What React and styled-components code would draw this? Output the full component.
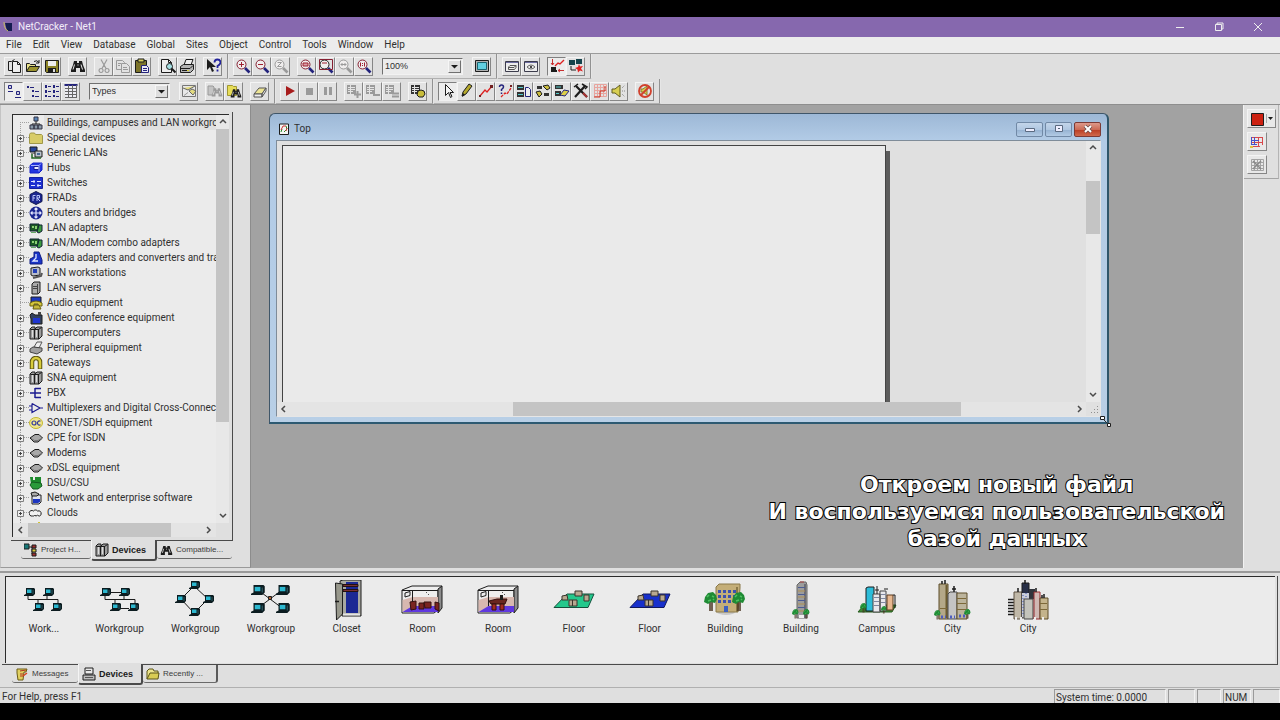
import React from "react";
import styled, { createGlobalStyle, css } from "styled-components";

const UI = 'Roboto, "Open Sans", sans-serif';
const ARIAL = '"Liberation Sans", Arial, sans-serif';

const Global = createGlobalStyle`
  * { box-sizing: border-box; }
  body { margin: 0; background: #000; }
  button, select { font: inherit; color: inherit; margin: 0; padding: 0; border: 0; background: none; border-radius: 0; }
  ul { list-style: none; margin: 0; padding: 0; }
  svg { flex: none; }
`;

/* ---------- frame ---------- */
const Shell = styled.div`
  height: 100vh;
  min-height: 600px;
  padding: 17px 0;
  display: flex;
  flex-direction: column;
  background: #000;
  color: #303030;
  font: 10px/14px ${UI};
`;
const Frame = styled.div`
  flex: 1;
  min-height: 0;
  display: flex;
  flex-direction: column;
  background: #dfdfdf;
`;
const TitleBar = styled.header`
  height: 20px;
  display: flex;
  align-items: center;
  background: #8668ae;
  color: #f3edf9;
  padding: 0 3px;
`;
const Title = styled.h1`
  flex: 1;
  margin: 0 0 0 5px;
  font: inherit;
`;
const WindowControl = styled.button`
  width: 39px;
  height: 20px;
  display: flex;
  align-items: center;
  justify-content: center;
`;
const MenuBar = styled.nav`
  height: 17px;
  display: flex;
  align-items: center;
  gap: 11px;
  padding-left: 6px;
  background: #ececec;
  border-bottom: 1px solid #9b9b9b;
`;

/* ---------- toolbars ---------- */
const ToolRow = styled.div`
  height: 25px;
  display: flex;
  flex: none;
`;
const Band = styled.div`
  display: flex;
  align-items: center;
  gap: 7px;
  padding: 0 5px 0 4px;
  border-bottom: 1px solid #b0b0b0;
  border-right: 2px groove #e6e6e6;
`;
const Group = styled.div`
  display: flex;
`;
const ToolButton = styled.button`
  width: 19px;
  height: 19px;
  display: flex;
  align-items: center;
  justify-content: center;
  background: #e2e2e2;
  border: 1px solid;
  border-color: #f4f4f4 #868686 #868686 #f4f4f4;
  ${(p) =>
    p.$pressed &&
    css`
      background: #ececec;
      border-color: #808080 #f0f0f0 #f0f0f0 #808080;
    `}
`;
const ComboBox = styled.label`
  position: relative;
  width: 81px;
  height: 17px;
  margin: 0 2px;
  display: block;
  background: #ececec;
  border: 1px solid;
  border-color: #707070 #f2f2f2 #f2f2f2 #707070;
  select {
    appearance: none;
    display: block;
    width: 100%;
    height: 15px;
    padding: 0 2px;
    font: 9px/15px ${ARIAL};
    outline: 0;
  }
`;
const ComboArrow = styled.span`
  position: absolute;
  top: 1px;
  right: 1px;
  width: 13px;
  height: 13px;
  display: flex;
  align-items: center;
  justify-content: center;
  background: #dedede;
  border: 1px solid;
  border-color: #f6f6f6 #707070 #707070 #f6f6f6;
  pointer-events: none;
`;

/* ---------- body ---------- */
const Body = styled.div`
  flex: 1;
  min-height: 0;
  display: flex;
  border-top: 1px solid #8e8e8e;
`;
const Side = styled.aside`
  width: 251px;
  flex: none;
  display: flex;
  flex-direction: column;
  padding: 7px 17px 6px 10px;
  border-left: 1px solid #c4c4c4;
  border-right: 1px solid #8c8c8c;
  border-bottom: 1px solid #9a9a9a;
`;
const TreeFrame = styled.div`
  flex: 1;
  min-height: 0;
  padding: 2px 3px 3px 1px;
  border-right: 1px solid #4a4a4a;
  border-bottom: 1px solid #4a4a4a;
  display: flex;
`;
const TreeBox = styled.div`
  flex: 1;
  min-width: 0;
  display: grid;
  grid-template: minmax(0, 1fr) 14px / minmax(0, 1fr) 13px;
  background: #dfdfdf;
  border-top: 1px solid #2c2c2c;
  border-left: 1px solid #2c2c2c;
`;
const TreeList = styled.ul`
  overflow: hidden;
  background: #ebebeb;
`;
const TreeRow = styled.li`
  height: 15px;
  display: flex;
  align-items: center;
  white-space: nowrap;
`;
const Expander = styled.button`
  width: 16px;
  height: 15px;
  flex: none;
`;
const TreeLabel = styled.span`
  flex: 1;
  margin-left: 1px;
  padding-left: 3px;
  line-height: 15px;
  background: ${(p) => (p.$selected ? "#e0e0e0" : "transparent")};
`;
const VScroll = styled.div`
  display: flex;
  flex-direction: column;
  align-items: stretch;
  background: #e8e8e8;
`;
const HScroll = styled.div`
  display: flex;
  align-items: stretch;
  background: #e4e4e4;
`;
const ScrollArrow = styled.button`
  width: ${(p) => p.$w || 13}px;
  height: 14px;
  flex: none;
  display: flex;
  align-items: center;
  justify-content: center;
`;
const ScrollTrack = styled.div`
  flex: 1;
  display: flex;
  flex-direction: ${(p) => (p.$vertical ? "column" : "row")};
`;
const ScrollGap = styled.div`
  flex: ${(p) => p.$part};
`;
const ScrollThumb = styled.div`
  flex: ${(p) => p.$part};
  background: #c4c4c4;
`;

/* ---------- tabs ---------- */
const Tabs = styled.div`
  display: flex;
  align-items: flex-start;
  height: 20px;
  flex: none;
  padding-left: 10px;
`;
const Tab = styled.button`
  width: ${(p) => p.$w}px;
  height: 18px;
  display: flex;
  align-items: center;
  gap: 3px;
  padding: 0 3px;
  white-space: nowrap;
  font: 8px/14px ${ARIAL};
  color: #3c3c3c;
  border-bottom: 1px solid #6a6a6a;
  border-right: ${(p) => (p.$edge ? "2px solid #5a5a5a" : "0")};
  border-radius: 0 0 3px 3px;
  ${(p) =>
    p.$active &&
    css`
      height: 21px;
      margin-top: -1px;
      font: bold 9px/14px ${ARIAL};
      color: #1c1c1c;
      background: #dfdfdf;
      border-bottom: 2px solid #4a4a4a;
      border-right: 2px solid #4a4a4a;
      border-left: 1px solid #f4f4f4;
    `}
`;

/* ---------- desktop and its window ---------- */
const Desktop = styled.main`
  position: relative;
  flex: 1;
  min-width: 0;
  background: #a2a2a2;
  padding: 8px 0 0 18px;
`;
const Child = styled.section`
  position: relative;
  width: 840px;
  height: 311px;
  display: flex;
  flex-direction: column;
  padding: 0 6px 5px 6px;
  border: 1px solid #3f5669;
  border-bottom: 2px solid #2d5a72;
  border-right: 2px solid #2f566b;
  border-radius: 6px 6px 0 0;
  background: linear-gradient(#9db8d6, #b2cbe6 26px, #b8cfe6);
`;
const ChildBar = styled.div`
  height: 26px;
  flex: none;
  display: flex;
  align-items: center;
  gap: 2px;
  padding: 4px 0 0 2px;
`;
const ChildTitle = styled.h2`
  flex: 1;
  margin: 0 0 0 2px;
  font: inherit;
`;
const ChildButton = styled.button`
  width: 27px;
  height: 15px;
  display: flex;
  align-items: center;
  justify-content: center;
  border: 1px solid ${(p) => (p.$close ? "#7c3a35" : "#7189a6")};
  border-radius: 2px;
  background: ${(p) =>
    p.$close
      ? "linear-gradient(#dd9a8b, #cc6a55 50%, #b93c22 51%, #d0694c)"
      : "linear-gradient(#c3d5ea, #b0c7e1 50%, #94b1d1 51%, #b2cae4)"};
`;
const ChildBody = styled.div`
  flex: 1;
  min-height: 0;
  display: grid;
  grid-template: minmax(0, 1fr) 14px / minmax(0, 1fr) 14px;
  border: 1px solid #7f8c99;
  border-bottom-color: #e6e6e6;
  border-right-color: #e6e6e6;
  background: #e0e0e0;
`;
const Canvas = styled.div`
  padding: 4px 0 0 5px;
  display: flex;
  overflow: hidden;
`;
const Paper = styled.div`
  width: 604px;
  background: #eaeaea;
  border: 1px solid #444;
  border-bottom: 0;
`;
const PaperShadow = styled.div`
  width: 4px;
  margin-top: 6px;
  background: #5c5c5c;
`;
const ResizeCursor = styled.svg`
  position: absolute;
  right: -6px;
  bottom: -7px;
`;
const Caption = styled.p`
  position: absolute;
  right: 18px;
  bottom: 16px;
  margin: 0;
  text-align: center;
  white-space: pre-line;
  font: bold 22px/27px "DejaVu Sans", sans-serif;
  color: #fff;
  -webkit-text-stroke: 2px #000;
  paint-order: stroke fill;
`;
const RightDock = styled.aside`
  width: 37px;
  flex: none;
  border-left: 1px solid #f2f2f2;
`;
const DockTools = styled.div`
  height: 74px;
  display: flex;
  flex-direction: column;
  align-items: flex-start;
  gap: 4px;
  padding: 4px 0 0 3px;
  margin-right: 1px;
  border-right: 1px solid #b4b4b4;
  border-bottom: 1px solid #a4a4a4;
`;
const DockButton = styled(ToolButton)`
  width: ${(p) => p.$w || 20}px;
  background: #e8e8e8;
`;

/* ---------- bottom dock ---------- */
const BottomDock = styled.section`
  flex: none;
  margin-top: 3px;
  padding: 3px 2px 2px 2px;
  border-top: 2px solid #9a9a9a;
`;
const GalleryFrame = styled.div`
  border-bottom: 1px solid #4a4a4a;
  border-right: 1px solid #4a4a4a;
  padding: 0 2px 1px 3px;
`;
const Gallery = styled.div`
  height: 87px;
  background: #ebebeb;
  border-top: 1px solid #2c2c2c;
  border-left: 1px solid #2c2c2c;
`;
const GalleryGrid = styled.ul`
  width: 100%;
  max-width: 1060px;
  display: grid;
  grid-template-columns: repeat(14, 1fr);
`;
const GalleryItem = styled.li`
  display: flex;
  flex-direction: column;
  align-items: center;
  padding-top: 3px;
`;
const StatusBar = styled.footer`
  height: 16px;
  flex: none;
  display: flex;
  gap: 2px;
  border-top: 1px solid #b0b0b0;
  line-height: 18px;
`;
const StatusText = styled.div`
  flex: 1;
  padding-left: 2px;
`;
const StatusCell = styled.div`
  width: ${(p) => p.$w}px;
  margin-top: 1px;
  padding-left: 1px;
  line-height: 16px;
  border-top: 1px solid #9a9a9a;
  border-left: 1px solid #9a9a9a;
  border-right: 1px solid #f2f2f2;
`;

/* ---------- drawings ---------- */
const Svg = ({ s = 16, children, ...rest }) => (
  <svg width={s} height={s} viewBox={`0 0 ${s} ${s}`} fill="none" aria-hidden="true" {...rest}>
    {children}
  </svg>
);

const K = "#1c1c1c";
const G = "#9a9a9a";
const N = "#23237c";

const Lens = ({ c = K, h = N, children }) => (
  <>
    <circle cx="6.5" cy="6.5" r="4.5" stroke={c} fill="#f0eeee" />
    <path d="M10 10l4.5 4.5" stroke={h} strokeWidth="2.6" />
    {children}
  </>
);
const Bino = ({ c = K, f = "#e8e8e8" }) => (
  <>
    <path d="M4 3h3v2h2V3h3l1 4 2 5v2h-5v-4H6v4H1v-2l2-5z" fill={c} />
    <path d="M4.5 6.500l-1.500 5M11 6.500l1.500 5M7.500 7h1" stroke={f} />
  </>
);
const Server = ({ c = G }) => (
  <>
    <path d="M1 2h3v9H1zM5 2h5v9H5z" fill={c} />
    <path d="M2 4.500h7M2 6.500h7M2 8.500h5" stroke="#e4e4e4" />
  </>
);
const Gear = ({ x = 8, y = 8, c = "#c8bc3a" }) => (
  <path d={`M${x} ${y}l3-1 3 1 1 3-2 3h-4l-2-2z`} fill={c} stroke={K} />
);

const T = {
  new: <><path d="M6.500 3.500h5l3 3v8h-8z" fill="#eee" stroke={K} /><path d="M6.500 12.500h-4v-9h3l3-2" stroke={K} /><path d="M11.500 3.500v3h3" stroke={K} /></>,
  open: <><path d="M1.500 13V5.500h3l1 1h5V9" fill="#e6e08a" stroke={K} /><path d="M1.500 13.500l3-5h10l-3 5z" fill="#9a922c" stroke={K} /><path d="M9 3.500q3-2 5 1M14 2v3h-3" stroke={K} /></>,
  save: <><path d="M1.500 2.500h13v12h-12l-1-1z" fill="#8c8428" stroke={K} /><path d="M4 3h8v5H4z" fill="#eee" /><path d="M4 10h8v4H4z" fill={K} /><path d="M9 11h2v3H9z" fill="#ddd" /></>,
  find: <Bino />,
  cut: <path d="M5 1.500l5 9M11 1.500l-5 9M5 10.500a2 2 0 1 0 .1 0M11 10.500a2 2 0 1 0 .1 0" stroke={G} strokeWidth="1.200" />,
  copy: <><path d="M1.500 2.500h6l2 2v7h-8z" stroke={G} /><path d="M6.500 5.500h5l3 3v6h-8z" fill="#e2e2e2" stroke={G} /><path d="M3 5.500h3M3 7.500h2M8 9.500h4M8 11.500h5" stroke={G} /></>,
  paste: <><path d="M1.500 2.500h11v12h-11z" fill="#7c742a" stroke={K} /><path d="M4 1h6v3H4z" fill="#d6cf60" stroke={K} /><path d="M7.500 7.500h5l2 2v5h-7z" fill="#e8e8f4" stroke={N} /><path d="M9 10.500h4M9 12.500h4" stroke={N} /></>,
  preview: <><path d="M1.500 1.500h7l3 3v10h-10z" fill="#eee" stroke={K} /><path d="M8.500 1.500v3h3" stroke={K} /><circle cx="9.500" cy="8.500" r="3" fill="#a6e0e4" stroke={K} /><path d="M11.500 10.500l4 4" stroke={K} strokeWidth="2" /></>,
  print: <><path d="M5 7l2-5.500h7L12 7z" fill="#eee" stroke={K} /><path d="M1.500 8.500l3-2h10v5l-3 3h-10z" fill="#b4b4b4" stroke={K} /><path d="M2 10.500h9l3-3M3 12.500h7" stroke={K} /><path d="M8 12h2v1H8z" fill="#d8ce30" /></>,
  help: <><path d="M2 1v11l3-3 2 5 2-1-2-4h4z" fill={K} /><path d="M9.500 4.500q0-3 3-3t3 3q0 1.500-3 3.500v2M12.500 11.500v2" stroke="#23239c" strokeWidth="1.800" /></>,
  zin: <Lens c="#862032"><path d="M4 6.500h5M6.500 4v5" stroke="#a02030" /></Lens>,
  zout: <Lens c="#862032"><path d="M4 6.500h5" stroke="#a02030" /></Lens>,
  zq: <Lens c={G} h={G}><path d="M4.500 4.500h4l-4 4h4" stroke={G} /></Lens>,
  zsel: <Lens c="#862032"><path d="M4 5h5v3H4z" stroke="#a02030" fill="#d9a0a8" /></Lens>,
  zpage: <Lens><path d="M1.500 1.500h13v10h-13z" stroke="#862032" /><path d="M4 5h5" stroke="#a02030" /></Lens>,
  zprev: <Lens c={G} h={G}><path d="M3.500 6.500h6M5 5v3M8 5v3" stroke={G} /></Lens>,
  z11: <Lens c="#862032"><path d="M4.500 4.500v4M8.500 4.500v4M6.500 5v1M6.500 7v1" stroke="#a02030" /></Lens>,
  full: <><path d="M1.500 2.500h13v11h-13z" fill="#b0b0b0" stroke={K} /><path d="M3.500 4.500h9v7h-9z" fill="#62cfe0" stroke="#1a6470" /></>,
  win: <><path d="M1.500 3.500h13v10h-13z" fill="#ececec" stroke="#3c3c4c" /><path d="M2 4.500h12" stroke="#6c6ca0" /><path d="M4 9.500h6l2-2M4.500 9v2.500h6l1.500-2v-2H6L4.500 9" stroke="#555" /></>,
  eye: <><path d="M1.500 3.500h13v10h-13z" fill="#ececec" stroke="#3c3c4c" /><path d="M2 4.500h12" stroke="#6c6ca0" /><path d="M4 9q4-4 8 0-4 4-8 0z" stroke="#666" /><path d="M7 8h2v2H7z" fill="#444" /></>,
  trace: <><path d="M3.500 1v6M2 5l1.500 2L5 5" stroke="#c83030" /><path d="M6 8l3-3 2 1 4-4" stroke="#d22" strokeWidth="1.400" /><path d="M2 9h5v3h1v2H2z" fill={K} /><path d="M9 12.500h6M11 11l-2 1.500L11 14" stroke="#c83030" /></>,
  burst: <><path d="M1 2h6v5H1zM8 1h6v5H8z" fill="#14444c" /><path d="M3 8v4h5" stroke={K} /><path d="M11 6l1 2.500 3-.5-2 2.500 2 3-3-1-2 2-.5-3L7 10l3-1z" fill="#e02020" /></>,
  tLarge: <><path d="M2.500 2.500h3v3h-3zM10.500 8.500h3v3h-3z" stroke={N} fill="#ccd" /><path d="M2 8.500h5M9 14.500h6" stroke={N} /></>,
  tSmall: <><path d="M2 3h2v2H2zM7 7h2v2H7zM7 12h2v2H7z" fill={N} /><path d="M5 4.500h4M10 8.500h4M10 13.500h4" stroke={N} /></>,
  tList: <><path d="M1 2h2v3H1zM9 2h2v3H9zM1 7h2v3H1zM9 7h2v3H9zM1 12h2v2H1zM9 12h2v2H9z" fill={N} /><path d="M4 3.500h3M12 3.500h3M4 8.500h3M12 8.500h3M4 13.500h3M12 13.500h3" stroke={N} /></>,
  tDetail: <><path d="M2 2h12v12H2z" fill="#ececf2" /><path d="M1.500 2h13" stroke={N} strokeWidth="2" /><path d="M2 5.500h12M2 8.500h12M2 11.500h12M2 14.500h12M5.500 2v12M9.500 2v12M13.500 2v12" stroke="#666" /></>,
  mail: <><path d="M1.500 2.500h13v11h-13z" fill="#e8e8e8" stroke="#777" /><path d="M2 5l5 2 7-4M8 8l3-2 4 2-3 4z" stroke="#666" fill="#e4dc80" /><path d="M3 12.500l4-3" stroke="#999" /></>,
  findOff: <><path d="M1 3h5l1 1v8H1z" fill="#c4c4c4" stroke={G} /><g transform="translate(4 3) scale(.75)"><Bino c={G} /></g></>,
  findDev: <><path d="M1.500 2.500h5l1 1h3v9h-9z" fill="#e6dc58" stroke="#a09830" /><g transform="translate(4 4) scale(.75)"><Bino /></g></>,
  erase: <><path d="M2 11l5-6h7l-4 6z" fill="#ece494" stroke="#555" /><path d="M2 11h8v3H2zM10 11l4-6v3l-4 6z" fill="#f0f0f0" stroke="#555" /></>,
  play: <path d="M4 3l9 5-9 5z" fill="#a81c1c" />,
  stop: <path d="M5 5h7v7H5z" fill={G} />,
  pause: <path d="M4 4h3v8H4zM9 4h3v8H9z" fill={G} />,
  addSrv: <><Server /><path d="M11.500 8v7M8 11.500h7" stroke={G} strokeWidth="2" /></>,
  delSrv: <><Server /><path d="M8 12h7" stroke={G} strokeWidth="2" /></>,
  eqSrv: <><Server /><path d="M8 10.500h7M8 13.500h7" stroke={G} strokeWidth="2" /></>,
  cfgSrv: <><Server c="#333" /><Gear x={8} y={8} /></>,
  arrow: <path d="M5.500 1.500v11l3-3 2 5 1.500-1-2-4h3.500z" fill="#f4f4f4" stroke={K} />,
  pencil: <><path d="M3 13l1-4 6-8 3 2-6 8z" fill="#b4a82c" stroke={K} /><path d="M3 14l1-4 2 2z" fill={K} /></>,
  link: <><path d="M2 13l5-6 2 2 5-6" stroke="#d22" strokeWidth="1.300" /><path d="M1 12h2v2H1zM12 2h3v3h-3z" fill="#702020" /></>,
  linkq: <><path d="M4 14l4-4 2 1 4-6" stroke="#d22" strokeWidth="1.300" strokeDasharray="3 1" /><path d="M2.500 4q0-2 2-2t2 2q0 1-2 2.500v1.500M4.500 9.500v1.500" stroke={N} strokeWidth="1.500" /><path d="M13 2h2v2h-2z" fill="#702020" /></>,
  srvDoc: <><path d="M1 2h7v5H1zM1 9h7v5H1z" fill="#333" /><path d="M2 4.500h5M2 11.500h5" stroke="#5cc" /><path d="M9.500 4.500h3l2 2v7h-5z" fill="#eee" stroke={N} /></>,
  swap: <><path d="M2 3h5v3H2zM9 10h5v3H9z" fill="#333" /><path d="M8 3l5-1 2 3-3 2zM1 9l4-1 2 3-3 3z" fill="#cbbd3e" stroke={K} /></>,
  srvEdit: <><path d="M1 2h8v4H1zM1 8h6v5H1z" fill="#333" /><path d="M2 4h5M2 10.500h3" stroke="#5cc" /><path d="M6 12l4-5 5 1-4 5z" fill="#dccf48" stroke={N} /></>,
  tools: <><path d="M2 14L12 3M3 3l11 11" stroke={K} strokeWidth="2.200" /><path d="M9 1l5 3-2 2M1 4l4-3" stroke={K} strokeWidth="1.500" /><path d="M10 10l4 4" stroke="#a33" strokeWidth="2" /></>,
  grid: <><path d="M2.500 1.500h12v12h-12zM5.500 2v11M8.500 2v11M11.500 2v11M3 4.500h11M3 7.500h11M3 10.500h11" stroke="#e8a49e" /><path d="M2 14h6V8h5V3" stroke="#c32" /></>,
  sound: <><path d="M1 6h3l5-4v12l-5-4H1z" fill="#d8cf52" stroke="#5f5a20" /><path d="M11 5l3-3M11 8h4M11 11l3 3" stroke="#888" strokeDasharray="1 1" /></>,
  mute: <><path d="M4 6h2l4-3v9L6 9H4z" fill="#d8cf52" stroke="#8a7c28" /><circle cx="8" cy="8" r="6" stroke="#d1402c" strokeWidth="1.800" /><path d="M4 12l8-8" stroke="#d1402c" strokeWidth="1.800" /></>,
};

const box3 = (
  <><path d="M1 3l2-2h3v2l2-2h5v9l-3 3H1z" fill="#9c9c9c" stroke={K} /><path d="M5.500 3v10M9.500 3v10M9.500 3.500l3-2M1.500 3.500h8" stroke={K} /><path d="M3.500 4v7M7.500 4v7" stroke="#ddd" /></>
);
const slab = <><path d="M1 7l5-3.500h4L13.500 7 9 11H5z" fill="#a8a8a8" stroke={K} /><path d="M2 7.500l3.500 2H9l4-2.500" stroke="#777" /></>;
const card = (
  <><path d="M1 3h9v7H1z" fill="#1c5a24" stroke="#123" /><path d="M10 4h3v6l-3 2-2-1z" fill="#3a9a3e" stroke="#123" /><path d="M3 5h2v2H3zM6 5h2v3H6z" fill="#8ccf74" /><path d="M2 11.500h5" stroke="#6a6" /></>
);

const D = {
  buildings: <><path d="M7 4v4M3 10V8h8v2" stroke={K} /><path d="M5 1h4v4H5z" fill="#5a86b8" stroke="#334" /><path d="M1 9h4v4H1zM9 9h4v4H9zM5 9h4v4H5z" fill="#8a9aa8" stroke="#334" /></>,
  folder: <path d="M.5 3.500l1-1.500h4l1 1.500h6l1 1v8h-13z" fill="#d8cc68" stroke="#a09848" />,
  lan: <><path d="M1 1h7v5H1z" fill="#27459c" stroke={K} /><path d="M2 7h6v1H2z" fill="#888" /><path d="M6 5h7v6H6z" fill="#bcc4cc" stroke={K} /><path d="M8 7h3v2H8z" fill="#486894" /><path d="M3 8v4h9" stroke="#262" strokeWidth="1.500" /></>,
  hub: <><path d="M1 4.500L4 2h9v7l-3 3H1z" fill="#2336e0" stroke="#1520c8" /><path d="M5 5.500h5v3H5z" fill="#eef" stroke="#101a90" /><path d="M2 4.500h8v6M10 4.500l2-2" stroke="#a8b4ff" /></>,
  switch: <><path d="M.5 1.500h13v11H.5z" fill="#1c2fd0" stroke="#1520a0" /><path d="M2 5.500h4M8 5.500h4M2 9.500h4M8 9.500h4M5 4v3M9 8v3" stroke="#dfe4ff" /></>,
  frad: <><path d="M7 .5l6 3v7l-6 3-6-3v-7z" fill="#1a2590" stroke="#101850" /><path d="M4 10V4.500h2.500M4 7h2M8 10V4.500h2.500V7H8l3 3" stroke="#b8c4f8" /></>,
  router: <><circle cx="7" cy="7" r="6.500" fill="#1b2790" /><path d="M7 2v10M2 7h10M5.500 3.500L7 2l1.500 1.500M5.500 10.500L7 12l1.500-1.500M3.500 5.500L2 7l1.500 1.500M10.500 5.500L12 7l-1.500 1.500" stroke="#e4e8ff" strokeWidth="1.200" /></>,
  card,
  media: <><path d="M5 1h5l3 8v4H1V8l4-2z" fill="#1a35c8" stroke="#101c80" /><path d="M7 3v4l-3 3h5" stroke="#dfe6ff" strokeWidth="1.300" /></>,
  station: <><path d="M2 2l7-1 2 1v7l-7 1-2-1z" fill="#b8bcc8" stroke={K} /><path d="M4 3h4v4H4z" fill="#2440b8" /><path d="M4 12l8-2 1-3" stroke="#555" strokeWidth="2" /></>,
  server: <><path d="M3 3l2-2h6v10l-2 2H3z" fill="#aaa" stroke={K} /><path d="M4 5.500h4M4 7.500h4M8.500 3v10" stroke="#444" /></>,
  audio: <><path d="M2 1h10v7H2z" fill="#1c38c0" stroke={K} /><path d="M1 7q6-4 12 0v3H9V8H5v2H1z" fill="#d6c83c" stroke="#6a6010" /><path d="M5 9h5l2 4H4z" fill="#c6b83c" stroke="#6a6010" /></>,
  video: <><path d="M1 4l2-2 3 2h7v9H2V8z" fill="#31405c" stroke={K} /><path d="M4 7h7v5H4z" fill="#2036d0" /><path d="M9 1h3v3H9z" fill="#444" /></>,
  box3,
  printer: <><path d="M5 6l3-5h5l-3 6z" fill="#eee" stroke="#555" /><path d="M1 8l3-2 9 1v3l-5 3-7-2z" fill="#a0a0a0" stroke="#444" /></>,
  gate: <><path d="M3 13V6a4 4 0 0 1 8 0v7" stroke="#5c5410" strokeWidth="4.500" /><path d="M3 12.500V6a4 4 0 0 1 8 0v6.500" stroke="#d8cc3c" strokeWidth="2.500" /></>,
  pbx: <path d="M1 7h5M6 2v10M6 2.500h6M6 7h6M6 11.500h6" stroke="#1b1b90" strokeWidth="1.500" />,
  mux: <path d="M3 2.500l8 4.500-8 4.500V2.500M0 5h3M0 9h3M11 7h3" stroke="#1b1b90" strokeWidth="1.200" />,
  sonet: <><ellipse cx="7" cy="7" rx="6.500" ry="5.500" fill="#f0e68c" stroke="#c4b830" /><circle cx="5" cy="7" r="2" stroke="#333a9c" strokeWidth="1.200" /><path d="M11.500 5.300a2 2 0 1 0 0 3.400" stroke="#333a9c" strokeWidth="1.200" /></>,
  slab,
  dsu: <><path d="M1 1h3v3h2V1h6v7H2z" fill="#1d8a2c" /><path d="M1 9l2-3 9 1 1 3-4 3H4z" fill="#2a9a3a" stroke="#145a20" /></>,
  soft: <><path d="M3 5l3-1h6v7l-2 2H3z" fill="#dfe2ee" stroke={K} /><path d="M4 8h7v3l-2 1H4z" fill="#1c35c0" /><path d="M2 2l4-1 4 2-2 2H3z" fill="#aaa" stroke={K} /></>,
  cloud: <path d="M3.500 10a2.800 2.800 0 1 1 1-5 2.500 2.500 0 0 1 4 0 2.500 2.500 0 1 1 2 5q-1.500 0-2-1-1 1.500-3 .5-1 .800-2 .5z" stroke={K} fill="#f2f2f2" />,
  tip: <path d="M9 1h2v4H9z" fill="#d2c432" />,
};

const Pc = ({ x, y, k = 1 }) => (
  <g transform={`translate(${x} ${y}) scale(${k})`}>
    <path d="M2 0h8l1 1v5L9 8H0V7l2-1z" fill="#0c1c20" />
    <path d="M3 1.500h4.500V5H3z" fill="#2cb8d0" />
    <path d="M9 2v4" stroke="#2a5860" />
  </g>
);
const Tree = ({ x, y, k = 1 }) => (
  <g transform={`translate(${x} ${y}) scale(${k})`}>
    <path d="M6 8v11M8 8v11" stroke="#4a3420" strokeWidth="1.500" />
    <path d="M1 5l3-4 5-1 3 3 1 4-2 4-4-1-3 2-4-2z" fill="#1f8a34" />
    <path d="M3 5l2-2M8 4l2 1M4 9l3-1M9 8l1-1" stroke="#4cc060" strokeWidth="1.500" />
  </g>
);
const Room = ({ children }) => (
  <>
    <path d="M1 9l10-4h30l-4 4v20l-4 3H1z" fill="#eee" stroke={K} />
    <path d="M37 8l4-3v22l-4 5z" fill="#8c8c8c" stroke={K} />
    <path d="M1.500 19l10-3H37v12H11L1.500 31z" fill="#d8b8b0" />
    <path d="M1.500 31l10-6H37v6z" fill="#6038e0" />
    <path d="M4 12l5-1.500v4L4 16zM11.500 9v16M1 9.500h36" stroke={K} />
    <path d="M25 11.500h1M27 13.500h1" stroke="#555" />
    {children}
  </>
);
const FloorPlan = ({ c, e }) => (
  <>
    <path d="M14 13h27l-6 13.500H1z" fill={c} stroke={e} />
    <path d="M9 15l5-1 1 5H9zM16 19h8v6h-8zM22 10h7v5h-7zM31 14h5v6h-5z" fill="#b8a890" stroke="#3a342c" />
    <path d="M19.500 19v6" stroke="#3a342c" />
  </>
);

const I = {
  wg1: <><path d="M5 14v4.500h30V23M24 14v4M15 18v5" stroke={K} /><Pc x={1} y={7} /><Pc x={20} y={7} /><Pc x={10} y={22} /><Pc x={28} y={22} /></>,
  wg2: <><path d="M6 14v4.500h30V23M25 14v4M16 18v5M11 11.500h11M20 27.500h10" stroke={K} /><Pc x={1} y={7} /><Pc x={20} y={7} /><Pc x={11} y={22} /><Pc x={29} y={22} /></>,
  wg3: <><path d="M20 5L7 18l13 14 14-14z" stroke={K} /><Pc x={15} y={0} /><Pc x={1} y={14} /><Pc x={29} y={14} /><Pc x={15} y={27} /></>,
  wg4: <><path d="M8 9l24 18M32 9L8 27" stroke={K} /><Pc x={1} y={4} k={1.25} /><Pc x={26} y={4} k={1.25} /><Pc x={1} y={22} k={1.25} /><Pc x={26} y={22} k={1.25} /><path d="M18.500 15.500h3v3h-3z" fill="#b06030" stroke={K} /></>,
  closet: <><path d="M14 0l3-1h18v36H16z" fill="#a8a8a0" stroke={K} /><path d="M20 1h12v31H20z" fill="#1c2894" /><path d="M17 3.500h15v2H17zM17 8.500h15v2H17z" fill="#7a3034" stroke="#241010" /><path d="M9.500 2l7 1v30l-6 6z" fill="#98988c" stroke={K} /><path d="M9 20.500h4" stroke={K} strokeWidth="1.500" /><path d="M17 33.500h17" stroke="#e4e4e4" strokeWidth="2" /></>,
  room1: <Room><path d="M9 21l6-1v8l-5 1zM18 22h5v6h-5zM23 21h7v6h-6zM34 21l4 1v8l-4-2z" fill="#7a2420" stroke="#34100e" /></Room>,
  room2: <Room><path d="M12 20l8-2h10l-2 5H14z" fill="#6a2620" stroke="#34100e" /><path d="M15 23h4v6h-4zM23 23h4v6h-4z" fill="#a42a22" stroke="#34100e" /><path d="M23 14h3v5h-3z" fill={K} /></Room>,
  floorG: <FloorPlan c="#24c88c" e="#14503c" />,
  floorB: <FloorPlan c="#1830cc" e="#10185c" />,
  bld1: <><ellipse cx="22" cy="31" rx="9" ry="3" fill="#c8c8c8" /><path d="M12 6l3-3h21v4l-2 24H12z" fill="#c4ae78" stroke="#8a7848" /><path d="M33 6v25" stroke="#8a7848" strokeWidth="2" /><path d="M14 10.500h18M14 15.500h18M14 20.500h18" stroke="#3c50b0" strokeWidth="3" strokeDasharray="3 2" /><path d="M20 25h4v6h-4z" fill="#3c60c0" /><Tree x={0} y={11} /><Tree x={28} y={11} /></>,
  bld2: <><path d="M17 4l3-3h6l1 3v33H17z" fill="#9c9c9c" stroke="#666" /><path d="M25 3v34" stroke="#6c6c74" strokeWidth="2" /><path d="M18 6.500h7M18 13.500h7M18 19.500h7M18 26.500h7" stroke="#4c5c94" /><path d="M18 10h7M18 16h7M18 23h7M18 30h7" stroke="#b09050" /><path d="M20 1h4" stroke="#a44" /><Tree x={12} y={28} k={0.5} /><Tree x={23} y={28} k={0.5} /><path d="M19 34h5v3h-5z" fill="#eee" /></>,
  campus: <><path d="M8 24h32l-4 7H2z" fill="#3c8a34" stroke="#285c20" /><path d="M10 7l2-1h6v24h-8z" fill="#2cbcd8" stroke={K} /><path d="M17 13h7v18h-7zM24 10h6v20h-6z" fill="#e8e8ec" stroke="#444" /><path d="M18 16.500h5M18 20.500h5M18 24.500h5M25 13.500h5M25 17.500h5M25 21.500h5" stroke="#8088a0" /><path d="M31 14h6v15h-6z" fill="#e8b890" stroke="#5c3c20" /><path d="M21 5v8M19 9h4M28 8h4M37 14h2v13" stroke={K} /><Tree x={4} y={22} k={0.5} /><Tree x={25} y={25} k={0.4} /></>,
  city1: <><path d="M8 3h9v35H8z" fill="#b4a888" stroke="#5c4c28" /><path d="M15.500 4v33" stroke="#6c5c30" strokeWidth="2" /><path d="M17 13l2-2h7v27h-9z" fill="#c4c4c4" stroke="#4c4c4c" /><path d="M26 12h10v26H26z" fill="#bcb49c" stroke="#5c4c28" /><path d="M26 17.500h9M26 22.500h9M26 28.500h9M9 27.500h7" stroke="#7c6838" /><path d="M11 0v3M14-1v4M23 5v6M21 8h4" stroke={K} strokeWidth="1.500" /><Tree x={3} y={29} k={0.5} /><Tree x={33} y={28} k={0.5} /><path d="M10 36h5M19 36h5M28 35h6" stroke="#4c5cc0" strokeWidth="3" strokeDasharray="2 2" /></>,
  city2: <><path d="M1 17h7v21H1z" fill="#eee" /><path d="M1 18.500h7M1 21.500h7M1 24.500h7M1 27.500h7M1 30.500h7M1 33.500h7" stroke={K} strokeWidth="1.500" /><path d="M7 11h8v27H7z" fill="#c0b8a8" stroke="#5c5040" /><path d="M15 2h7v34h-7z" fill="#283048" stroke={K} /><path d="M15 12h8v24h-8z" fill="#c8ccd8" /><path d="M16 14v20M19 12v20" stroke="#3c54b0" strokeDasharray="1 2" /><path d="M22 8h6v10h-6z" fill="#30343c" /><path d="M17 18h9v20h-9z" fill="#c4c4bc" stroke="#444" /><path d="M27 11h6v27h-6z" fill="#d0b8b4" stroke="#94282c" /><path d="M33 17h8v21h-8z" fill="#c4b48c" stroke="#5c4c28" /><path d="M33 22.500h7M33 28.500h7" stroke="#7c6838" /><path d="M18-1v4M11 7v4M29 7v4M37 13v4M35 14v3" stroke={K} strokeWidth="1.500" /><path d="M9 36v3M14 36v3M28 36v3M36 36v3" stroke="#eee" strokeWidth="2" /></>,
};

const Chevron = ({ dir }) => {
  const d = { up: "M1 5l3-3 3 3", down: "M1 2l3 3 3-3", left: "M5 1L2 4l3 3", right: "M2 1l3 3-3 3" }[dir];
  return <Svg s={8}><path d={d} stroke="#4a4a4a" strokeWidth="1.500" /></Svg>;
};
const DownArrow = () => <Svg s={7}><path d="M0 2h7L3.500 5.500z" fill={K} /></Svg>;

/* ---------- data ---------- */
const menus = ["File", "Edit", "View", "Database", "Global", "Sites", "Object", "Control", "Tools", "Window", "Help"];

const tree = [
  ["Buildings, campuses and LAN workgro", "buildings", false],
  ["Special devices", "folder", true],
  ["Generic LANs", "lan", true],
  ["Hubs", "hub", true],
  ["Switches", "switch", true],
  ["FRADs", "frad", true],
  ["Routers and bridges", "router", true],
  ["LAN adapters", "card", true],
  ["LAN/Modem combo adapters", "card", true],
  ["Media adapters and converters and tra", "media", true],
  ["LAN workstations", "station", true],
  ["LAN servers", "server", true],
  ["Audio equipment", "audio", false],
  ["Video conference equipment", "video", true],
  ["Supercomputers", "box3", true],
  ["Peripheral equipment", "printer", true],
  ["Gateways", "gate", true],
  ["SNA equipment", "box3", true],
  ["PBX", "pbx", true],
  ["Multiplexers and Digital Cross-Connec", "mux", true],
  ["SONET/SDH equipment", "sonet", true],
  ["CPE for ISDN", "slab", true],
  ["Modems", "slab", true],
  ["xDSL equipment", "slab", true],
  ["DSU/CSU", "dsu", true],
  ["Network and enterprise software", "soft", true],
  ["Clouds", "cloud", true],
];

const gallery = [
  ["Work...", "wg1"], ["Workgroup", "wg2"], ["Workgroup", "wg3"], ["Workgroup", "wg4"],
  ["Closet", "closet"], ["Room", "room1"], ["Room", "room2"], ["Floor", "floorG"], ["Floor", "floorB"],
  ["Building", "bld1"], ["Building", "bld2"], ["Campus", "campus"], ["City", "city1"], ["City", "city2"],
];

const Tools = ({ names, pressed }) => (
  <Group>
    {names.map((n) => (
      <ToolButton key={n} type="button" aria-label={n} $pressed={n === pressed}>
        <Svg>{T[n]}</Svg>
      </ToolButton>
    ))}
  </Group>
);
const Combo = ({ label, value }) => (
  <ComboBox>
    <select aria-label={label} defaultValue={value}><option>{value}</option></select>
    <ComboArrow><DownArrow /></ComboArrow>
  </ComboBox>
);
const Branch = ({ plus, first }) => (
  <svg width="16" height="15" viewBox="0 0 16 15" fill="none" aria-hidden="true">
    <path d={first ? "M7.500 7v8M7 7.500h9" : "M7.500 0v15M7 7.500h9"} stroke="#a0a0a0" strokeDasharray="1 1" />
    {plus && <><path d="M4.500 5.500h6v6h-6z" fill="#eee" stroke="#808080" /><path d="M6 8.500h3M7.500 7v3" stroke="#444" /></>}
  </svg>
);

export default function App() {
  return (
    <Shell>
      <Global />
      <Frame>
        <TitleBar>
          <Svg s={10}><path d="M2 1h7v8H4z" fill="#141c50" /><path d="M1 0q0 7 4 9" stroke="#c8c060" /></Svg>
          <Title>NetCracker - Net1</Title>
          <WindowControl type="button" aria-label="Minimize"><Svg s={10}><path d="M1 5.500h8" stroke="#eee" /></Svg></WindowControl>
          <WindowControl type="button" aria-label="Restore"><Svg s={10}><path d="M1.500 2.500h6v6h-6zM3 2V1h6v6H8" stroke="#eee" /></Svg></WindowControl>
          <WindowControl type="button" aria-label="Close"><Svg s={10}><path d="M1 1l8 8M9 1L1 9" stroke="#eee" /></Svg></WindowControl>
        </TitleBar>
        <MenuBar>{menus.map((m) => <button key={m} type="button">{m}</button>)}</MenuBar>

        <ToolRow>
          <Band>
            <Tools names={["new", "open", "save"]} />
            <Tools names={["find"]} />
            <Tools names={["cut", "copy", "paste"]} />
            <Tools names={["preview", "print"]} />
            <Tools names={["help"]} />
          </Band>
          <Band>
            <Tools names={["zin", "zout", "zq"]} />
            <Tools names={["zsel", "zpage", "zprev", "z11"]} />
            <Combo label="Zoom" value="100%" />
            <Tools names={["full"]} />
          </Band>
          <Band>
            <Tools names={["win", "eye"]} />
            <Tools names={["trace", "burst"]} pressed="trace" />
          </Band>
        </ToolRow>
        <ToolRow>
          <Band>
            <Tools names={["tLarge", "tSmall", "tList", "tDetail"]} pressed="tLarge" />
            <Combo label="View by" value="Types" />
            <Tools names={["mail"]} />
            <Tools names={["findOff", "findDev"]} />
            <Tools names={["erase"]} />
          </Band>
          <Band>
            <Tools names={["play", "stop", "pause"]} />
            <Tools names={["addSrv", "delSrv", "eqSrv"]} />
            <Tools names={["cfgSrv"]} />
          </Band>
          <Band>
            <Tools names={["arrow", "pencil", "link", "linkq", "srvDoc", "swap", "srvEdit", "tools", "grid", "sound"]} pressed="arrow" />
            <Tools names={["mute"]} />
          </Band>
        </ToolRow>

        <Body>
          <Side>
            <TreeFrame>
              <TreeBox>
                <TreeList>
                  {tree.map(([label, icon, plus], i) => (
                    <TreeRow key={label}>
                      <Expander type="button" aria-label={`Expand ${label}`}><Branch plus={plus} first={i === 0} /></Expander>
                      <Svg s={14}>{D[icon]}</Svg>
                      <TreeLabel $selected={i === 0}>{label}</TreeLabel>
                    </TreeRow>
                  ))}
                  <TreeRow><Expander type="button" aria-label="Expand"><Branch /></Expander><Svg s={14}>{D.tip}</Svg></TreeRow>
                </TreeList>
                <VScroll>
                  <ScrollArrow type="button" aria-label="Scroll up"><Chevron dir="up" /></ScrollArrow>
                  <ScrollTrack $vertical>
                    <ScrollThumb $part={293} /><ScrollGap $part={87} />
                  </ScrollTrack>
                  <ScrollArrow type="button" aria-label="Scroll down"><Chevron dir="down" /></ScrollArrow>
                </VScroll>
                <HScroll>
                  <ScrollArrow type="button" aria-label="Scroll left" $w={15}><Chevron dir="left" /></ScrollArrow>
                  <ScrollTrack><ScrollThumb $part={144} /><ScrollGap $part={30} /></ScrollTrack>
                  <ScrollArrow type="button" aria-label="Scroll right" $w={15}><Chevron dir="right" /></ScrollArrow>
                </HScroll>
              </TreeBox>
            </TreeFrame>
            <Tabs role="tablist">
              <Tab type="button" role="tab" $w={70}><Svg s={14}><path d="M0 1h5v5H0z" fill="#187878" stroke={K} /><path d="M5 4h3v7h2" stroke={K} /><path d="M8 2h4v3H8zM8 10h4v3H8z" fill="#a03030" stroke={K} /><path d="M8 6h4v3H8z" fill="#d8c840" stroke={K} /></Svg>Project H...</Tab>
              <Tab type="button" role="tab" aria-selected="true" $active $w={66}><Svg s={14}>{box3}</Svg>Devices</Tab>
              <Tab type="button" role="tab" $w={75}><svg width="13" height="14" viewBox="0 0 16 16" aria-hidden="true"><Bino /></svg>Compatible...</Tab>
            </Tabs>
          </Side>

          <Desktop>
            <Child>
              <ChildBar>
                <Svg s={12}><path d="M1.500 1h9v10.500h-9z" fill="#f4f4f4" stroke={K} /><path d="M3 9l1-3M8 3l1 3-3 3" stroke="#282" /><path d="M3 7l2-4h3M9 5L8 8" stroke="#c33" /></Svg>
                <ChildTitle>Top</ChildTitle>
                <ChildButton type="button" aria-label="Minimize"><Svg s={12}><path d="M1.500 5.500h9v3h-9z" fill="#eef" stroke="#5a6a80" /></Svg></ChildButton>
                <ChildButton type="button" aria-label="Maximize"><Svg s={12}><path d="M2.500 2.500h7v6h-7z" fill="#eef" stroke="#5a6a80" /><path d="M5 5h2v1H5z" fill="#567" /></Svg></ChildButton>
                <ChildButton type="button" aria-label="Close" $close><Svg s={12}><path d="M3 3l6 6M9 3L3 9" stroke="#6a4a48" strokeWidth="3.500" /><path d="M3 3l6 6M9 3L3 9" stroke="#fff" strokeWidth="2" /></Svg></ChildButton>
              </ChildBar>
              <ChildBody>
                <Canvas><Paper /><PaperShadow /></Canvas>
                <VScroll>
                  <ScrollArrow type="button" aria-label="Scroll up"><Chevron dir="up" /></ScrollArrow>
                  <ScrollTrack $vertical>
                    <ScrollGap $part={26} /><ScrollThumb $part={53} /><ScrollGap $part={154} />
                  </ScrollTrack>
                  <ScrollArrow type="button" aria-label="Scroll down"><Chevron dir="down" /></ScrollArrow>
                </VScroll>
                <HScroll>
                  <ScrollArrow type="button" aria-label="Scroll left"><Chevron dir="left" /></ScrollArrow>
                  <ScrollTrack>
                    <ScrollGap $part={223} /><ScrollThumb $part={448} /><ScrollGap $part={112} />
                  </ScrollTrack>
                  <ScrollArrow type="button" aria-label="Scroll right"><Chevron dir="right" /></ScrollArrow>
                </HScroll>
                <Svg s={14}><path d="M11 4h1v1h-1zM8 7h1v1H8zM11 7h1v1h-1zM5 10h1v1H5zM8 10h1v1H8zM11 10h1v1h-1z" fill="#909090" /></Svg>
              </ChildBody>
              <ResizeCursor width="14" height="14" viewBox="0 0 14 14" fill="none" aria-hidden="true">
                <path d="M4 4l7 7" stroke="#333" /><path d="M1.500 1.500h4v3h-4zM8.500 8.500h3v3h-3z" fill="#fff" stroke={K} />
              </ResizeCursor>
            </Child>
            <Caption>{"Откроем новый файл\nИ воспользуемся пользовательской\nбазой данных"}</Caption>
          </Desktop>

          <RightDock>
            <DockTools>
              <DockButton type="button" aria-label="Fill colour" $w={29}>
                <Svg s={16}><path d="M2.500 2.500h12v12h-12z" fill="#cc2010" stroke={K} /></Svg>
                <Svg s={9}><path d="M1.500 0v9" stroke="#aaa" /><path d="M3 3h5L5.500 6z" fill={K} /></Svg>
              </DockButton>
              <DockButton type="button" aria-label="Colour grid"><Svg><path d="M3 3.500h11M3 8.500h11M3 12.500h8M9.500 3v10M13.500 3v8" stroke="#d8484c" /><path d="M2 6.500h8M5.500 3v8M2 10.500h6M2.500 3v8" stroke="#4850c8" /><path d="M1 12h3v2H1z" fill="#e4c040" /></Svg></DockButton>
              <DockButton type="button" aria-label="Grid off"><Svg><path d="M2.500 2.500h12v11h-12zM5.500 2v12M8.500 2v12M11.500 2v12M2 5.500h12M2 8.500h12M2 11.500h12" stroke="#a4a4a4" /><path d="M4 4l8 8M12 4l-8 8" stroke="#8a8a8a" strokeWidth="1.500" /></Svg></DockButton>
            </DockTools>
          </RightDock>
        </Body>

        <BottomDock>
          <GalleryFrame>
            <Gallery>
              <GalleryGrid>
                {gallery.map(([label, icon], i) => (
                  <GalleryItem key={i}>
                    <svg width="42" height="42" viewBox="0 -1 42 42" fill="none" aria-hidden="true">{I[icon]}</svg>
                    {label}
                  </GalleryItem>
                ))}
              </GalleryGrid>
            </Gallery>
          </GalleryFrame>
          <Tabs role="tablist">
            <Tab type="button" role="tab" $w={66}><Svg s={14}><path d="M2 2h10l-1 3H9l-1 8H3L2 6z" fill="#e0d060" stroke="#6a5c14" /><path d="M5 4l6-1M5 7h3M5 9h3" stroke="#b03020" /><path d="M8 9l4-3" stroke="#d84020" strokeWidth="1.500" /></Svg>Messages</Tab>
            <Tab type="button" role="tab" aria-selected="true" $active $w={65}><Svg s={14}><path d="M3 1h8v6H3z" fill="#e8e8e8" stroke={K} /><path d="M1 8h12v5H1z" fill="#bbb" stroke={K} /><path d="M4 3.500h5M3 10.500h8" stroke="#555" /></Svg>Devices</Tab>
            <Tab type="button" role="tab" $edge $w={75}><Svg s={14}><path d="M1 12V4l2-2h4l1 2h4v3" fill="#ece48c" stroke="#5a5418" /><path d="M1 12l3-6h9l-1 6z" fill="#d8cc54" stroke="#5a5418" /></Svg>Recently ...</Tab>
          </Tabs>
        </BottomDock>
        <StatusBar>
          <StatusText>For Help, press F1</StatusText>
          <StatusCell $w={112}>System time: 0.0000</StatusCell>
          <StatusCell $w={27} /><StatusCell $w={24} />
          <StatusCell $w={28}>NUM</StatusCell>
          <StatusCell $w={27} />
        </StatusBar>
      </Frame>
    </Shell>
  );
}
